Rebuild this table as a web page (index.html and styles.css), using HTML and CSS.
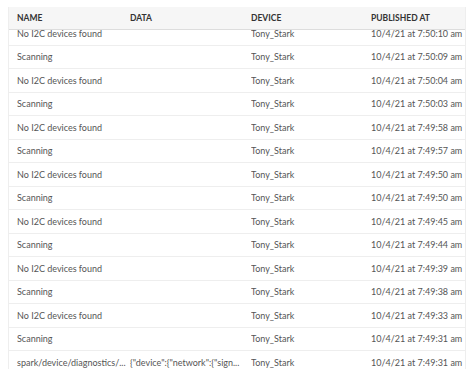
FILE: index.html
```html
<!DOCTYPE html>
<html lang="en">

<head>
    <meta charset="UTF-8">
    <title>Events</title>
    <link rel="stylesheet" href="styles.css">
</head>

<body>

    <div class="events">
        <div class="row head">
            <div>NAME</div>
            <div>DATA</div>
            <div>DEVICE</div>
            <div>PUBLISHED AT</div>
        </div>
        <div class="list">
            <div class="row">
                <div>No I2C devices found</div>
                <div></div>
                <div>Tony_Stark</div>
                <div>10/4/21 at 7:50:10 am</div>
            </div>
            <div class="row">
                <div>Scanning</div>
                <div></div>
                <div>Tony_Stark</div>
                <div>10/4/21 at 7:50:09 am</div>
            </div>
            <div class="row">
                <div>No I2C devices found</div>
                <div></div>
                <div>Tony_Stark</div>
                <div>10/4/21 at 7:50:04 am</div>
            </div>
            <div class="row">
                <div>Scanning</div>
                <div></div>
                <div>Tony_Stark</div>
                <div>10/4/21 at 7:50:03 am</div>
            </div>
            <div class="row">
                <div>No I2C devices found</div>
                <div></div>
                <div>Tony_Stark</div>
                <div>10/4/21 at 7:49:58 am</div>
            </div>
            <div class="row">
                <div>Scanning</div>
                <div></div>
                <div>Tony_Stark</div>
                <div>10/4/21 at 7:49:57 am</div>
            </div>
            <div class="row">
                <div>No I2C devices found</div>
                <div></div>
                <div>Tony_Stark</div>
                <div>10/4/21 at 7:49:50 am</div>
            </div>
            <div class="row">
                <div>Scanning</div>
                <div></div>
                <div>Tony_Stark</div>
                <div>10/4/21 at 7:49:50 am</div>
            </div>
            <div class="row">
                <div>No I2C devices found</div>
                <div></div>
                <div>Tony_Stark</div>
                <div>10/4/21 at 7:49:45 am</div>
            </div>
            <div class="row">
                <div>Scanning</div>
                <div></div>
                <div>Tony_Stark</div>
                <div>10/4/21 at 7:49:44 am</div>
            </div>
            <div class="row">
                <div>No I2C devices found</div>
                <div></div>
                <div>Tony_Stark</div>
                <div>10/4/21 at 7:49:39 am</div>
            </div>
            <div class="row">
                <div>Scanning</div>
                <div></div>
                <div>Tony_Stark</div>
                <div>10/4/21 at 7:49:38 am</div>
            </div>
            <div class="row">
                <div>No I2C devices found</div>
                <div></div>
                <div>Tony_Stark</div>
                <div>10/4/21 at 7:49:33 am</div>
            </div>
            <div class="row">
                <div>Scanning</div>
                <div></div>
                <div>Tony_Stark</div>
                <div>10/4/21 at 7:49:31 am</div>
            </div>
            <div class="row">
                <div>spark/device/diagnostics/...</div>
                <div>{"device":{"network":{"sign...</div>
                <div>Tony_Stark</div>
                <div>10/4/21 at 7:49:31 am</div>
            </div>
        </div>
    </div>

</body>

</html>
```

FILE: styles.css
```css
* {
    margin: 0;
    padding: 0;
    box-sizing: border-box;
}

html,
body {
    height: 100%;
    overflow: hidden;
    background: white;
}

body {
    font-family: Lato, "Liberation Sans", sans-serif;
    font-size: 9px;
    color: #555;
}

.events {
    width: 458px;
    margin: 7px 0 0 8px;
    border-left: 1px solid #eee;
    border-right: 1px solid #eee;
}

.row {
    display: grid;
    grid-template-columns: 113px 121px 120px 1fr;
    align-items: center;
    height: 23.5px;
    padding-left: 8px;
    border-bottom: 1px solid #eee;
    white-space: nowrap;
}

.row div {
    overflow: hidden;
}

.head {
    height: 22.5px;
    background: #f6f6f6;
    border-bottom: 1px solid #ddd;
    color: #333;
    font-weight: bold;
    font-size: 8.5px;
    position: relative;
    z-index: 1;
}

.list {
    margin-top: -7.5px;
}
```
